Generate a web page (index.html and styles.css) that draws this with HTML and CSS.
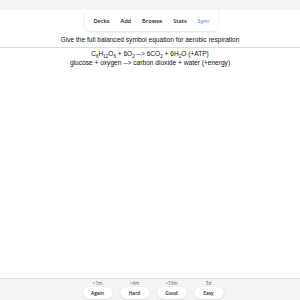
FILE: index.html
```html
<!DOCTYPE html>
<html>
<head>
<meta charset="utf-8">
<link rel="stylesheet" href="styles.css">
</head>
<body>
<div class="page">
  <header class="header">
    <nav class="tray">
      <a class="tab">Decks</a>
      <a class="tab">Add</a>
      <a class="tab">Browse</a>
      <a class="tab">Stats</a>
      <a class="tab sync">Sync</a>
    </nav>
  </header>
  <main class="card">
    <div class="question">Give the full balanced symbol equation for aerobic respiration</div>
    <hr class="divider">
    <div class="answer">
      <div>C<sub>6</sub>H<sub>12</sub>O<sub>6</sub> + 6O<sub>2</sub> --&gt; 6CO<sub>2</sub> + 6H<sub>2</sub>O (+ATP)</div>
      <div>glucose + oxygen --&gt; carbon dioxide + water (+energy)</div>
    </div>
  </main>
  <footer class="answers">
    <div class="choice"><span class="due">&lt;1m</span><button class="btn">Again</button></div>
    <div class="choice"><span class="due">&lt;6m</span><button class="btn">Hard</button></div>
    <div class="choice"><span class="due">&lt;10m</span><button class="btn">Good</button></div>
    <div class="choice"><span class="due">3d</span><button class="btn">Easy</button></div>
  </footer>
</div>
</body>
</html>
```

FILE: styles.css
```css
html, body {
  margin: 0;
  padding: 0;
  height: 100%;
  background: #fff;
  font-family: "Liberation Sans", Arial, sans-serif;
  color: #222;
}
.page {
  display: flex;
  flex-direction: column;
  height: 300px;
}
.header {
  display: flex;
  justify-content: center;
  background: linear-gradient(#f5f5f5 0, #f5f5f5 10px, #fff 10px);
  padding-top: 10px;
  padding-left: 3px;
}
.tray {
  display: flex;
  padding: 1px 3px 0;
  height: 20px;
  align-items: center;
  background: #fff;
  border-radius: 0 0 6px 6px;
  box-shadow: 0 1px 3px rgba(0,0,0,0.12);
}
.tab {
  font-family: "Open Sans", "Liberation Sans", sans-serif;
  font-size: 5.6px;
  font-weight: 600;
  color: #222;
  padding: 0 5.5px;
}
.sync { color: #3477e0; font-weight: 500; }
.card {
  flex: 1;
  text-align: center;
  font-size: 6.6px;
  color: #111;
  padding-top: 4px;
}
.question { line-height: 9px; }
.divider {
  border: 0;
  border-top: 1px solid #dcdcdc;
  margin: 3px 0 1px;
}
.answer { line-height: 9px; }
.answer sub { font-size: 4.5px; line-height: 0; vertical-align: -1.5px; }
.answers {
  height: 21px;
  border-top: 1px solid #e2e2e2;
  background: #f4f4f4;
  display: flex;
  justify-content: center;
  gap: 7px;
  padding-left: 6px;
}
.choice {
  display: flex;
  flex-direction: column;
  align-items: center;
  width: 30px;
}
.due {
  font-family: "Open Sans", "Liberation Sans", sans-serif;
  font-size: 4.5px;
  color: #555;
  line-height: 8px;
}
.btn {
  width: 30px;
  height: 12px;
  padding: 0;
  border: 0;
  border-radius: 6px;
  background: #fff;
  box-shadow: 0 0.5px 1.5px rgba(0,0,0,0.2);
  font-family: "Open Sans", "Liberation Sans", sans-serif;
  font-size: 4.8px;
  font-weight: 600;
  color: #222;
}
```
